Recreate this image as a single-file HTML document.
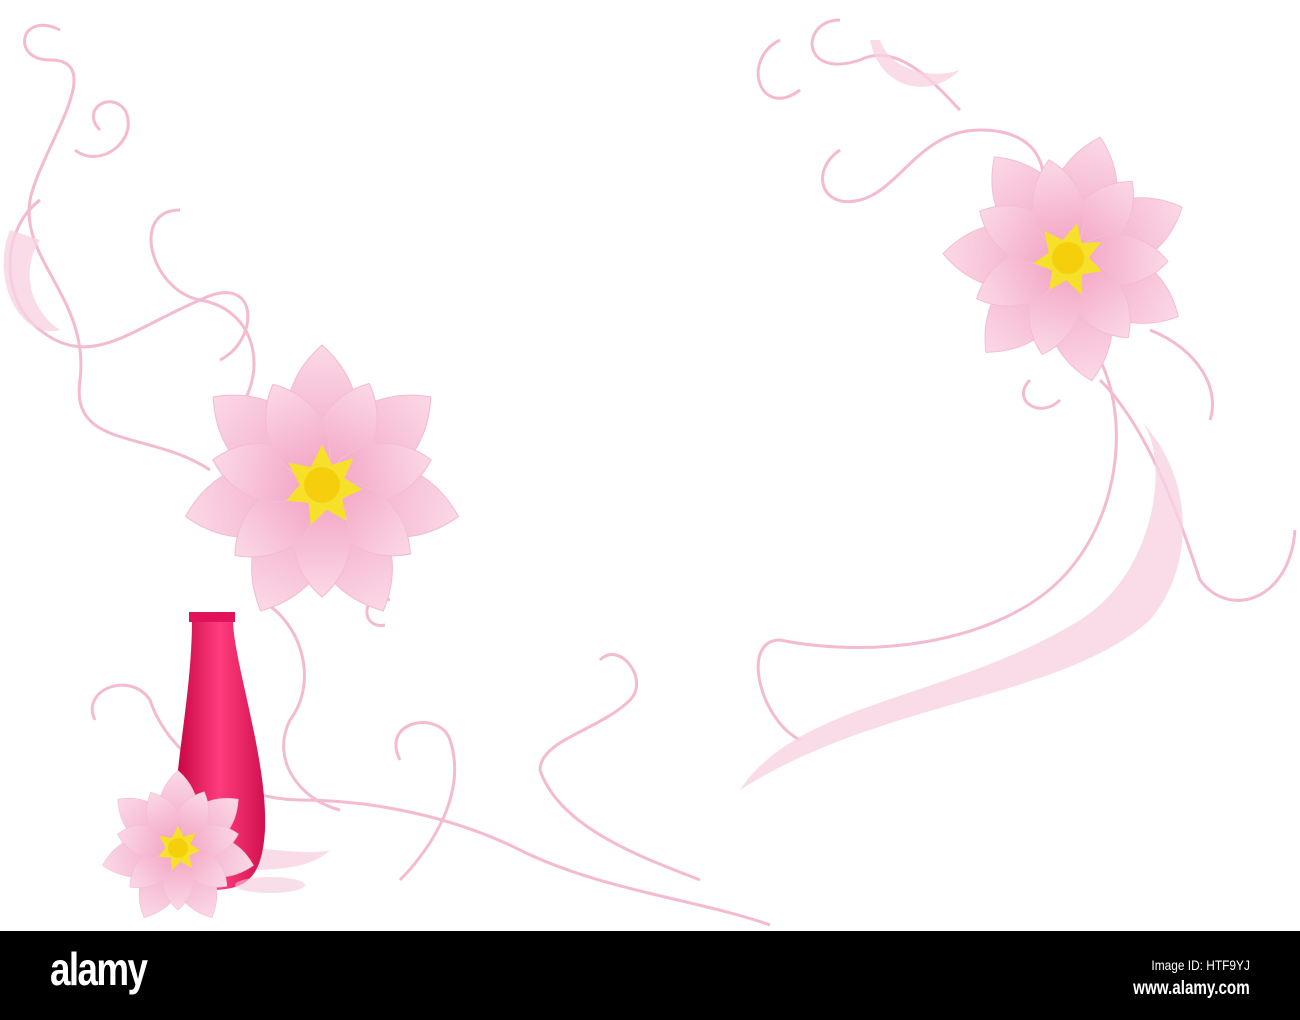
<!DOCTYPE html>
<html><head><meta charset="utf-8"><style>
html,body{margin:0;padding:0;background:#fff;}
#w{position:relative;width:1300px;height:1020px;overflow:hidden;background:#fff;}
#bar{position:absolute;left:0;top:931px;width:1300px;height:89px;background:#000;}
#logo{position:absolute;left:50px;top:942px;color:#fff;font:bold 46px "Liberation Sans Narrow","Liberation Sans",sans-serif;letter-spacing:-2px;transform:scaleX(.8);transform-origin:left;}
#id{position:absolute;right:50px;top:957px;color:#fff;font:14px "Liberation Sans",sans-serif;transform:scaleX(.85);transform-origin:right;}
#url{position:absolute;right:50px;top:978px;color:#fff;font:bold 19px "Liberation Sans",sans-serif;transform:scaleX(.8);transform-origin:right;}
</style></head><body><div id="w">
<svg width="1300" height="931" viewBox="0 0 1300 931" style="position:absolute;left:0;top:0">
<defs>
<linearGradient id="pet" x1="0" y1="1" x2="0" y2="0"><stop offset="0" stop-color="#f29ec0"/><stop offset="1" stop-color="#fbd9e7"/></linearGradient>
<linearGradient id="bot" x1="0" y1="0" x2="1" y2="0"><stop offset="0" stop-color="#c4003f"/><stop offset=".5" stop-color="#ff3d7e"/><stop offset="1" stop-color="#d0104e"/></linearGradient>
<path id="p" d="M0 0 C-40 -30 -45 -85 0 -125 C45 -85 40 -30 0 0Z"/>
<path id="q" d="M0 0 C-32 -25 -35 -70 0 -100 C35 -70 32 -25 0 0Z"/>
<g id="flw">
<g fill="url(#pet)" stroke="#f4bcd3" stroke-width="1">
<use href="#p" transform="rotate(0)"/><use href="#p" transform="rotate(51)"/><use href="#p" transform="rotate(103)"/><use href="#p" transform="rotate(154)"/><use href="#p" transform="rotate(206)"/><use href="#p" transform="rotate(257)"/><use href="#p" transform="rotate(309)"/>
<use href="#q" transform="rotate(25)"/><use href="#q" transform="rotate(77)"/><use href="#q" transform="rotate(128)"/><use href="#q" transform="rotate(180)"/><use href="#q" transform="rotate(231)"/><use href="#q" transform="rotate(283)"/><use href="#q" transform="rotate(334)"/>
</g>
<polygon points="0,-36 9,-18 28,-24 20,-6 36,4 18,12 22,32 4,22 -10,36 -12,16 -32,14 -20,0 -30,-20 -10,-16" fill="#f7e02a"/>
<circle r="16" fill="#f5c800" opacity=".7"/>
</g>
</defs>
<g fill="none" stroke="#f3b3cc" stroke-width="3" opacity=".9">
<path d="M60 30 C20 10 10 60 50 60 C110 60 40 150 30 200 C20 260 90 300 80 380 C70 450 150 430 210 470"/>
<path d="M40 200 C0 230 0 300 40 330 C90 370 130 330 200 300 C260 270 260 340 220 360"/>
<path d="M180 210 C130 210 150 290 200 300 C260 310 270 380 230 420"/>
<path d="M100 130 C80 110 110 90 125 110 C140 140 100 170 75 150"/>
<path d="M95 720 C80 690 130 670 150 700 C170 760 240 800 300 800 C380 800 460 820 520 850 C600 890 700 900 770 925"/>
<path d="M400 760 C380 720 440 710 450 740 C470 800 420 860 400 880"/>
<path d="M600 660 C620 640 650 680 630 700 C600 730 540 740 540 770 C560 830 650 860 700 880"/>
<path d="M260 600 C300 620 320 680 290 720 C270 760 300 800 340 810"/>
<path d="M390 600 C360 590 360 630 385 625"/>
<path d="M840 20 C800 20 800 80 860 60 C900 40 940 90 960 110"/>
<path d="M780 40 C740 60 760 120 800 90"/>
<path d="M840 150 C810 170 820 210 860 200 C900 190 920 130 980 130 C1040 130 1050 170 1040 200"/>
<path d="M1100 360 C1130 420 1120 520 1060 580 C1000 640 880 660 780 640 C740 640 760 720 800 740"/>
<path d="M1100 380 C1150 430 1180 520 1200 580 C1230 620 1290 600 1295 530"/>
<path d="M1030 380 C1010 400 1040 420 1060 400"/>
<path d="M1150 330 C1200 350 1220 390 1210 420"/>
</g>
<g fill="#f8d3e2" opacity=".8">
<path d="M740 790 C800 700 950 700 1080 620 C1160 570 1170 450 1140 420 C1190 470 1200 560 1150 620 C1060 700 880 700 740 790Z"/>
<path d="M10 230 C-10 280 20 340 60 330 C30 310 20 270 40 240Z"/>
<path d="M870 40 C880 90 930 100 960 70 C930 80 890 70 880 40Z"/>
<path d="M120 860 C200 830 300 860 330 850 C300 880 220 870 120 860Z"/>
</g>
<path d="M192 620 L233 620 C233 660 268 760 265 830 C262 880 245 890 210 890 C180 890 170 860 175 800 C180 740 192 680 192 620Z" fill="url(#bot)"/>
<rect x="189" y="612" width="46" height="10" fill="#e0125a"/>
<ellipse cx="270" cy="885" rx="35" ry="8" fill="#f3c8d8" opacity=".6"/>
<use href="#flw" transform="translate(322,485) scale(1.12)"/>
<use href="#flw" transform="translate(178,848) scale(.62)"/>
<use href="#flw" transform="translate(1068,258) scale(1.0) rotate(15)"/>
</svg>
<div id="bar"></div>
<div id="logo">alamy</div>
<div id="id">Image ID: HTF9YJ</div>
<div id="url">www.alamy.com</div>
</div></body></html>
